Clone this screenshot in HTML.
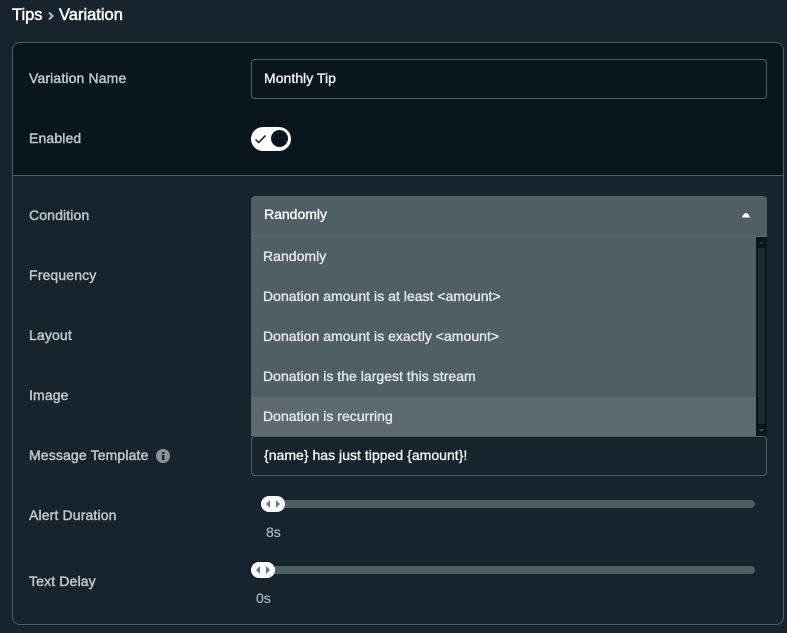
<!DOCTYPE html>
<html><head><meta charset="utf-8">
<style>
html,body{margin:0;padding:0;width:787px;height:633px;overflow:hidden;background:#17242d}
body{font-family:"Liberation Sans",sans-serif;position:relative}
.a{position:absolute;white-space:nowrap}
.lb{position:absolute;left:29px;font-size:14px;line-height:18px;color:#bdc6cb;letter-spacing:.14px;-webkit-text-stroke:.45px #bdc6cb}
.opt{position:absolute;left:263px;font-size:14px;line-height:18px;color:#e3e8ea;white-space:nowrap;letter-spacing:.03px;-webkit-text-stroke:.35px #e3e8ea}
.in{position:absolute;left:251px;width:514px;border:1px solid #4f5d65;border-radius:4px;height:38px;box-sizing:content-box}
.tr{position:absolute;height:8px;background:#4f5e65;border-radius:4px}
.th{position:absolute;width:24px;height:16px;background:#fff;border-radius:8px}
.th:before{content:"";position:absolute;left:5px;top:4px;border:4px solid transparent;border-left:0;border-right:4px solid #6a767c}
.th:after{content:"";position:absolute;right:5px;top:4px;border:4px solid transparent;border-right:0;border-left:4px solid #6a767c}
</style></head><body>
<div class="a" style="left:12px;top:5px;font-size:16.5px;line-height:20px;color:#fff;-webkit-text-stroke:.5px #fff">Tips</div>
<svg class="a" style="left:47px;top:11px" width="8" height="10"><path d="M2 1.500L5.500 5 2 8.500" fill="none" stroke="#b5bcc0" stroke-width="2"/></svg>
<div class="a" style="left:59px;top:5px;font-size:16.5px;line-height:20px;color:#fff;-webkit-text-stroke:.5px #fff">Variation</div>

<div class="a" style="left:12px;top:42px;width:770px;height:581px;border:1px solid #4f5d65;border-radius:8px;overflow:hidden">
  <div style="height:132px;background:#09161e;border-bottom:1px solid #4f5d65"></div>
</div>

<div class="lb" style="top:69px">Variation Name</div>
<div class="in" style="top:59px"></div>
<div class="a" style="left:264px;top:69px;font-size:14px;line-height:18px;color:#f1f3f4;letter-spacing:.03px;-webkit-text-stroke:.35px #f1f3f4">Monthly Tip</div>

<div class="lb" style="top:129px">Enabled</div>
<div class="a" style="left:251px;top:127px;width:40px;height:24px;background:#fff;border-radius:12px"></div>
<div class="a" style="left:271px;top:130px;width:17px;height:17px;background:#09161e;border-radius:50%"></div>
<svg class="a" style="left:254px;top:133px" width="14" height="12"><path d="M1.500 6.500L4.800 9.500 11.500 2.500" fill="none" stroke="#09161e" stroke-width="1.500"/></svg>

<div class="lb" style="top:206px">Condition</div>
<div class="lb" style="top:266px">Frequency</div>
<div class="lb" style="top:326px">Layout</div>
<div class="lb" style="top:386px">Image</div>
<div class="lb" style="top:446px">Message Template</div>
<svg class="a" style="left:156px;top:449px" width="14" height="14"><circle cx="7" cy="7" r="7" fill="#8b9296"/><rect x="6" y="6" width="2.400" height="5" fill="#17242d"/><rect x="6" y="3" width="2.400" height="2" fill="#17242d"/></svg>

<div class="a" style="left:251px;top:196px;width:516px;height:240px;background:#505f66;border-radius:4px 4px 0 0"></div>
<div class="a" style="left:251px;top:236px;width:516px;height:1px;background:#5c6a71"></div>
<div class="a" style="left:264px;top:205px;font-size:14px;line-height:18px;color:#fff;-webkit-text-stroke:.35px #fff">Randomly</div>
<svg class="a" style="left:741px;top:211px" width="10" height="8"><path d="M1 6.500C1.500 4.500 3.500 2 5 2S8.500 4.500 9 6.500Z" fill="#fff"/></svg>

<div class="a" style="left:251px;top:397px;width:505px;height:39px;background:#5d6b71"></div>
<div class="a" style="left:756px;top:237px;width:11px;height:199px;background:#0a171f"></div>
<div class="a" style="left:758px;top:248px;width:7px;height:176px;background:#1b2a33"></div>
<svg class="a" style="left:756px;top:238px" width="11" height="9"><path d="M3 6L5.500 3 8 6Z" fill="#24333c"/></svg>
<svg class="a" style="left:756px;top:426px" width="11" height="9"><path d="M3 3L5.500 6 8 3Z" fill="#3a4951"/></svg>

<div class="opt" style="top:247px">Randomly</div>
<div class="opt" style="top:287px">Donation amount is at least &lt;amount&gt;</div>
<div class="opt" style="top:327px">Donation amount is exactly &lt;amount&gt;</div>
<div class="opt" style="top:367px">Donation is the largest this stream</div>
<div class="opt" style="top:407px">Donation is recurring</div>

<div class="in" style="top:436px"></div>
<div class="a" style="left:264px;top:446px;font-size:14px;line-height:18px;color:#f1f3f4;letter-spacing:.03px;-webkit-text-stroke:.35px #f1f3f4">{name} has just tipped {amount}!</div>

<div class="lb" style="top:506px">Alert Duration</div>
<div class="tr" style="left:261px;top:500px;width:494px"></div>
<div class="th" style="left:261px;top:496px"></div>
<div class="a" style="left:266px;top:523px;font-size:14px;line-height:18px;color:#a9bac4;-webkit-text-stroke:.2px #a9bac4">8s</div>

<div class="lb" style="top:572px">Text Delay</div>
<div class="tr" style="left:251px;top:566px;width:504px"></div>
<div class="th" style="left:251px;top:562px"></div>
<div class="a" style="left:256px;top:589px;font-size:14px;line-height:18px;color:#a9bac4;-webkit-text-stroke:.2px #a9bac4">0s</div>
</body></html>
